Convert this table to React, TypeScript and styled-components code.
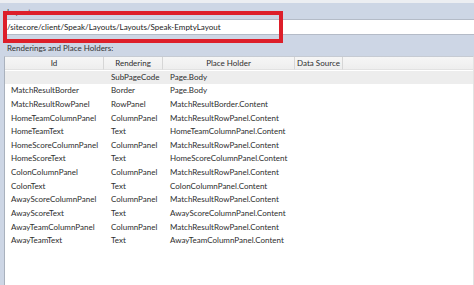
import React from 'react';
import styled, { createGlobalStyle } from 'styled-components';

const GlobalStyle = createGlobalStyle`
  html, body {
    margin: 0;
    padding: 0;
    background: #ffffff;
  }
  body {
    font-family: Lato, "Open Sans", "DejaVu Sans", sans-serif;
    font-size: 8px;
    color: #2e2e2e;
  }
`;

const Window = styled.div`
  width: 474px;
  height: 285px;
  overflow: hidden;
  display: flex;
  flex-direction: column;
  background: #cdd6e5;
  border-top: 3px solid #eceef2;
  box-sizing: border-box;
`;

const LayoutSection = styled.section`
  position: relative;
  display: flex;
  flex-direction: column;
  padding-top: 4px;
`;

const FieldLabel = styled.div`
  padding-left: 7px;
  height: 12px;
  line-height: 10px;
  color: #3a3a3a;
`;

const PathField = styled.div`
  margin-left: 6px;
  height: 14px;
  line-height: 14px;
  padding-left: 1px;
  background: #ffffff;
  border-top: 1px solid #b4bbc7;
  border-bottom: 1px solid #b4bbc7;
  color: #222222;
  white-space: nowrap;
`;

/* red annotation drawn over the layout field */
const Highlight = styled.div`
  position: absolute;
  left: 3px;
  top: 8px;
  width: 280px;
  height: 32px;
  border: 4px solid #dd1f2a;
  box-sizing: border-box;
  pointer-events: none;
`;

const SectionTitle = styled.div`
  padding: 8px 0 0 7px;
  height: 13px;
  line-height: 10px;
  color: #333333;
`;

const TableBox = styled.div`
  flex: 1;
  margin-left: 4px;
  background: #ffffff;
  border-left: 1px solid #a9b1bd;
  border-top: 1px solid #c6cbd3;
  border-right: 1px solid #e3e3e3;
  display: grid;
  grid-template-columns: 99px 59px 132px 48px 1fr;
  grid-auto-rows: 13.64px;
  align-content: start;
`;

const HeaderCell = styled.div<{ $last?: boolean }>`
  height: 12px;
  line-height: 12px;
  text-align: center;
  background: linear-gradient(#f6f6f6, #eeeeee);
  border-right: ${({ $last }) => ($last ? 'none' : '1px solid #d6d6d6')};
  border-bottom: 1px solid #e2e2e2;
  white-space: nowrap;
  overflow: hidden;
`;

const Cell = styled.div<{ $selected?: boolean; $first?: boolean }>`
  padding-left: ${({ $first }) => ($first ? '6px' : '7px')};
  line-height: 13.64px;
  white-space: nowrap;
  background: ${({ $selected }) => ($selected ? '#ededed' : 'transparent')};
`;

const rows: [string, string, string][] = [
  ['', 'SubPageCode', 'Page.Body'],
  ['MatchResultBorder', 'Border', 'Page.Body'],
  ['MatchResultRowPanel', 'RowPanel', 'MatchResultBorder.Content'],
  ['HomeTeamColumnPanel', 'ColumnPanel', 'MatchResultRowPanel.Content'],
  ['HomeTeamText', 'Text', 'HomeTeamColumnPanel.Content'],
  ['HomeScoreColumnPanel', 'ColumnPanel', 'MatchResultRowPanel.Content'],
  ['HomeScoreText', 'Text', 'HomeScoreColumnPanel.Content'],
  ['ColonColumnPanel', 'ColumnPanel', 'MatchResultRowPanel.Content'],
  ['ColonText', 'Text', 'ColonColumnPanel.Content'],
  ['AwayScoreColumnPanel', 'ColumnPanel', 'MatchResultRowPanel.Content'],
  ['AwayScoreText', 'Text', 'AwayScoreColumnPanel.Content'],
  ['AwayTeamColumnPanel', 'ColumnPanel', 'MatchResultRowPanel.Content'],
  ['AwayTeamText', 'Text', 'AwayTeamColumnPanel.Content'],
];

const headers = ['Id', 'Rendering', 'Place Holder', 'Data Source', ''];

export default function App() {
  return (
    <>
      <GlobalStyle />
      <Window>
        <LayoutSection>
          <FieldLabel>Layout</FieldLabel>
          <PathField>/sitecore/client/Speak/Layouts/Layouts/Speak-EmptyLayout</PathField>
          <Highlight />
        </LayoutSection>
        <SectionTitle>Renderings and Place Holders:</SectionTitle>
        <TableBox>
          {headers.map((h, i) => (
            <HeaderCell key={i} $last={i === headers.length - 1}>
              {h}
            </HeaderCell>
          ))}
          {rows.map((r, ri) => (
            <React.Fragment key={ri}>
              <Cell $first $selected={ri === 0}>{r[0]}</Cell>
              <Cell $selected={ri === 0}>{r[1]}</Cell>
              <Cell $selected={ri === 0}>{r[2]}</Cell>
              <Cell $selected={ri === 0} />
              <Cell $selected={ri === 0} />
            </React.Fragment>
          ))}
        </TableBox>
      </Window>
    </>
  );
}
